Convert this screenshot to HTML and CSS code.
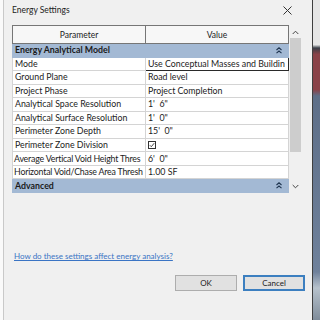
FILE: index.html
```html
<!DOCTYPE html>
<html lang="en">
  <head>
    <meta charset="utf-8" />
    <title>Energy Settings</title>
    <link rel="stylesheet" href="styles.css">
  </head>
  <body>
    <div class="window">
      <div class="edge"></div>

      <div class="dialog">
        <header class="titlebar">
          <span class="title">Energy Settings</span>
          <svg class="close" width="9" height="9" viewBox="0 0 9 9">
            <path d="M0.5 0.5 L8.5 8.5 M8.5 0.5 L0.5 8.5" stroke="#333" stroke-width="1" fill="none"/>
          </svg>
        </header>

        <div class="grid">
          <table class="props">
            <colgroup>
              <col class="c-name">
              <col class="c-value">
            </colgroup>
            <thead>
              <tr><th>Parameter</th><th>Value</th></tr>
            </thead>
            <tbody>
              <tr class="group">
                <td colspan="2"><span>Energy Analytical Model</span>
                  <svg class="fold" width="6" height="7" viewBox="0 0 6 7"><path d="M0.5 3 L3 0.8 L5.5 3 M0.5 6.2 L3 4 L5.5 6.2" stroke="#1f3550" stroke-width="1.1" fill="none"/></svg>
                </td>
              </tr>
              <tr><td>Mode</td><td class="edit">Use Conceptual Masses and Buildin</td></tr>
              <tr><td>Ground Plane</td><td>Road level</td></tr>
              <tr><td>Project Phase</td><td>Project Completion</td></tr>
              <tr><td>Analytical Space Resolution</td><td>1'&nbsp; 6"</td></tr>
              <tr><td>Analytical Surface Resolution</td><td>1'&nbsp; 0"</td></tr>
              <tr><td>Perimeter Zone Depth</td><td>15'&nbsp; 0"</td></tr>
              <tr><td>Perimeter Zone Division</td><td>
                <svg class="check" width="8" height="8" viewBox="0 0 8 8"><rect x="0.5" y="0.5" width="7" height="7" fill="#fff" stroke="#333"/><path d="M1.8 4.2 L3.3 5.7 L6.2 2.2" stroke="#333" stroke-width="0.9" fill="none"/></svg>
              </td></tr>
              <tr><td class="tight">Average Vertical Void Height Thres</td><td>6'&nbsp; 0"</td></tr>
              <tr><td class="tight">Horizontal Void/Chase Area Thresh</td><td>1.00 SF</td></tr>
              <tr class="group">
                <td colspan="2"><span>Advanced</span>
                  <svg class="fold" width="6" height="7" viewBox="0 0 6 7"><path d="M0.5 3 L3 0.8 L5.5 3 M0.5 6.2 L3 4 L5.5 6.2" stroke="#1f3550" stroke-width="1.1" fill="none"/></svg>
                </td>
              </tr>
            </tbody>
          </table>

          <div class="scroll">
            <svg class="arrow" width="7" height="5" viewBox="0 0 7 5"><path d="M0.7 4 L3.5 1.2 L6.3 4" stroke="#444" stroke-width="1" fill="none"/></svg>
            <div class="thumb"></div>
            <div class="track"></div>
            <svg class="arrow" width="7" height="5" viewBox="0 0 7 5"><path d="M0.7 1 L3.5 3.8 L6.3 1" stroke="#444" stroke-width="1" fill="none"/></svg>
          </div>
        </div>

        <a class="help" href="#">How do these settings affect energy analysis?</a>

        <div class="buttons">
          <button class="btn">OK</button>
          <button class="btn default">Cancel</button>
        </div>
      </div>

      <div class="frame"></div>
      <div class="desk"></div>
    </div>
  </body>
</html>
```

FILE: styles.css
```css
body {
  margin: 0;
  font-family: 'Lato', 'Noto Sans', sans-serif;
  font-size: 8px;
  color: #1b1b1b;
  background-color: #f0f0f0;
}

.window {
  display: flex;
  width: 320px;
  height: 320px;
  overflow: hidden;
}

.edge {
  width: 3px;
  background-color: #fafafa;
  border-right: 1px solid #c9c9c9;
}

.dialog {
  width: 308px;
  background-color: #f0f0f0;
  display: flex;
  flex-direction: column;
  padding-left: 8px;
  box-sizing: border-box;
}

.titlebar {
  display: flex;
  justify-content: space-between;
  align-items: center;
  height: 19px;
  padding-right: 20px;
}

.title {
  font-size: 8.5px;
  color: #222;
}

.close {
  margin-top: 1px;
}

.grid {
  display: flex;
  margin-top: 6px;
  height: 168px;
}

.props {
  width: 277px;
  height: 168px;
  table-layout: fixed;
  border-collapse: collapse;
  border: 1px solid #767676;
  background-color: #fff;
  font-size: 8.8px;
}

.c-name {
  width: 133px;
}

.props th {
  height: 17px;
  padding: 0;
  font-weight: normal;
  font-size: 8.5px;
  color: #222;
  background-color: #f7f7f7;
  border: 1px solid #767676;
}

.props td {
  height: 12.4px;
  padding: 0 0 0 2px;
  border: 1px solid #d4d4d4;
  white-space: nowrap;
  overflow: hidden;
  line-height: 10px;
}

.props td.tight {
  padding-left: 1px;
  letter-spacing: -0.2px;
}

.props td.edit {
  border: 1px solid #2a2a2a;
}

.props .group td {
  background-color: #a3b9d4;
  font-weight: bold;
  border-color: #a3b9d4;
  border-top: 1px solid #8ea6c4;
}

.group td {
  position: relative;
}

.fold {
  position: absolute;
  right: 6px;
  top: 3px;
}

.check {
  display: block;
}

.scroll {
  width: 13px;
  display: flex;
  flex-direction: column;
  align-items: center;
}

.arrow {
  margin: 5px 0 3px;
}

.thumb {
  width: 11px;
  height: 114px;
  background-color: #cdcdcd;
}

.track {
  height: 27px;
}

.help {
  margin-top: 58px;
  margin-left: 2px;
  color: #3a74c4;
  font-size: 8px;
  align-self: flex-start;
}

.buttons {
  display: flex;
  justify-content: flex-end;
  gap: 6px;
  margin-top: 14px;
  padding-right: 7px;
}

.btn {
  width: 62px;
  height: 16px;
  padding: 0;
  font-family: 'Lato', 'Noto Sans', sans-serif;
  font-size: 8px;
  color: #222;
  background-color: #e1e1e1;
  border: 1px solid #adadad;
}

.btn.default {
  border: 2px solid #3c7fc0;
}

.frame {
  width: 1px;
  background-color: #3f3f3f;
}

.desk {
  flex: 1;
  background: linear-gradient(180deg, #e6e6e6 0, #e6e6e6 14%, #3a3f48 15%, #8a4248 17%, #8a4248 28%, #5e6f88 30%, #6f819b 85%, #b7c2cc 90%, #7f8c9a 100%);
}
```
